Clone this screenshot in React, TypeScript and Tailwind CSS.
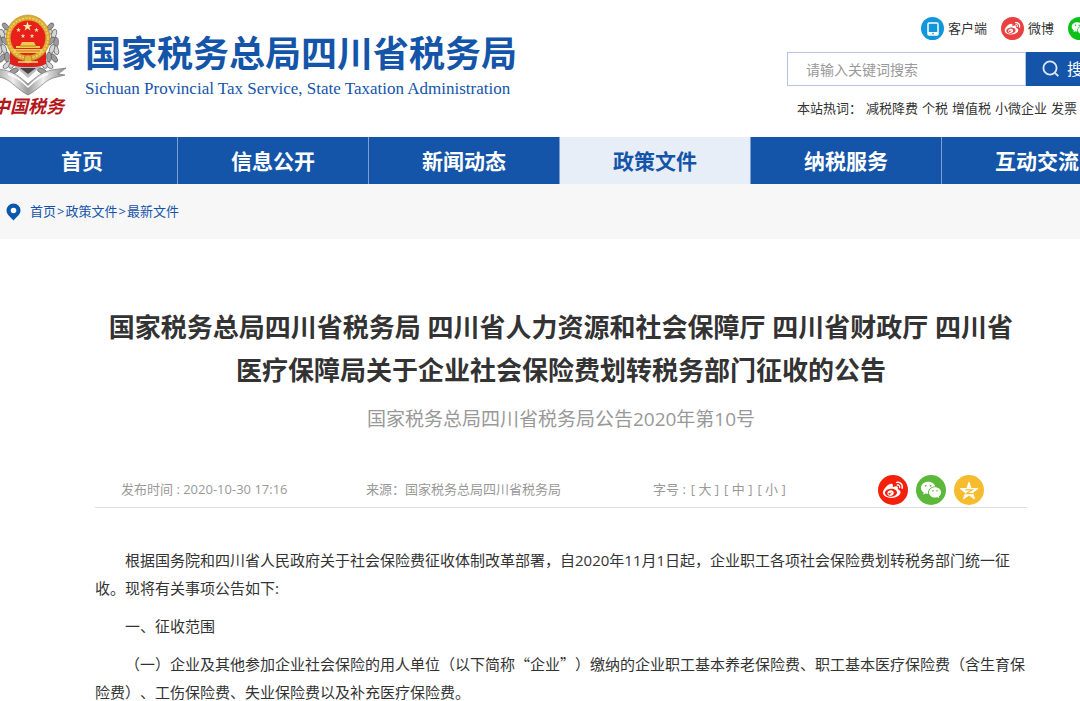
import { RiWechatFill, RiWeiboFill } from 'react-icons/ri';

const navItems = ['首页', '信息公开', '新闻动态', '政策文件', '纳税服务', '互动交流'];
const hotWords = ['减税降费', '个税', '增值税', '小微企业', '发票'];
const crumbs = ['首页', '政策文件', '最新文件'];
const fontSizes = ['大', '中', '小'];

// leaves of the right half of the wreath, mirrored for the left half
const leaves = [
  [50, 27, 40],
  [54, 34, 15],
  [56, 42, 0],
  [56, 50, -15],
  [54, 58, -35],
  [49, 65, -50],
  [42, 71, -65],
  [48, 33, 60],
  [51, 41, 40],
  [52, 49, 20],
  [49, 57, 0],
  [44, 64, -25],
];

const star = 'M0-1 .23-.31.95-.31.37.12.59.81 0 .38-.59.81-.37.12-.95-.31-.23-.31Z';

function Leaves() {
  return (
    <g stroke="#5d5d5d" strokeWidth=".7">
      {leaves.map(([x, y, angle], i) => (
        <ellipse
          key={i}
          cx={x}
          cy={y}
          rx="2.4"
          ry="4.8"
          fill={i % 2 ? '#d6d6d6' : '#9b9b9b'}
          transform={`rotate(${angle} ${x} ${y})`}
        />
      ))}
    </g>
  );
}

function Emblem() {
  return (
    <svg viewBox="-11 13 78 84" className="h-[84px] w-[78px]" aria-hidden="true">
      <defs>
        <linearGradient id="silver" x1="0" x2="1">
          <stop offset="0" stopColor="#8c8c8c" />
          <stop offset=".3" stopColor="#eeeeee" />
          <stop offset=".5" stopColor="#9a9a9a" />
          <stop offset=".7" stopColor="#f1f1f1" />
          <stop offset="1" stopColor="#8a8a8a" />
        </linearGradient>
      </defs>
      <Leaves />
      <g transform="translate(56 0) scale(-1 1)">
        <Leaves />
      </g>
      <path d="M8 60 28 78 48 60Z" fill="#bdbdbd" />
      <path d="M20 68h16l-8 6Z" fill="#444" />
      <path
        d="M-10 68 4 70C14 72 20 77 28 84c8-7 14-12 24-14l14-2-8 6 7 1-12 3C44 81 37 91 28 95 19 91 12 81 3 78l-12-3 7-1Z"
        fill="url(#silver)"
        stroke="#777"
        strokeWidth=".7"
      />
      <path d="M8 74c8 2 14 7 20 13 6-6 12-11 20-13" fill="none" stroke="#fff" strokeWidth="1.4" />
      {/* red drape under the gold ring */}
      <path d="M10 50h36v14c-6 3-12 3-18 3s-12 0-18-3Z" fill="#df1f1b" />
      <ellipse cx="28" cy="38" rx="22" ry="23" fill="#dcab32" stroke="#b98a1d" strokeWidth=".6" />
      <circle cx="28" cy="38" r="20" fill="none" stroke="#f0d272" strokeWidth="1.5" strokeDasharray="2 1.5" />
      <circle cx="28" cy="38" r="17.5" fill="#e8201c" />
      <g fill="#fbe9a0">
        <path d={star} transform="translate(27.5 26.5) scale(5)" />
        <path d={star} transform="translate(18.5 30) scale(2.6)" />
        <path d={star} transform="translate(36.5 30) scale(2.6)" />
        <path d={star} transform="translate(23 36) scale(2.4)" />
        <path d={star} transform="translate(32 36) scale(2.4)" />
      </g>
      <path d="M20 46l2-4h12l2 4h4v2H16v-2ZM13 49h30l-1 4H14Z" fill="#f3c94f" />
      <path d="M16 51h24M20 46h16" stroke="#a86f10" strokeWidth=".8" />
      <circle cx="28" cy="59" r="4" fill="#e3b13a" stroke="#b98a1d" />
      <path d="M18 62h20" stroke="#f6dc82" strokeWidth="1.5" />
    </svg>
  );
}

function QzoneIcon() {
  return (
    <svg viewBox="-1.1 -1.1 2.2 2" className="h-[19px] w-[20px]" aria-hidden="true">
      <path d={star} fill="#fff" stroke="#fff" strokeWidth=".12" strokeLinejoin="round" />
      <path d="M-.4-.18H.34L-.28.24H.42" fill="none" stroke="#f7bc2d" strokeWidth=".14" />
    </svg>
  );
}

function Header() {
  return (
    <header className="flex h-[137px] justify-between overflow-hidden">
      <a href="#" className="flex shrink-0 text-[#1455a9]">
        <div className="-ml-[11px] flex w-[78px] shrink-0 flex-col items-center pt-[13px]">
          <Emblem />
          <span className="text-[18px] leading-[18px] font-bold whitespace-nowrap text-[#b3161b] italic">中国税务</span>
        </div>
        <div className="pt-[31px] pl-[18px] whitespace-nowrap">
          <div className="text-[36px] leading-[46px] font-bold">国家税务总局四川省税务局</div>
          <div className="font-['Liberation_Serif',serif] text-[17px] leading-[24px]">
            Sichuan Provincial Tax Service, State Taxation Administration
          </div>
        </div>
      </a>
      <div className="w-[293px] shrink-0 overflow-hidden pt-[17px] whitespace-nowrap text-[#333]">
        <div className="flex gap-[14px] pl-[134px] text-[13px] leading-[23px]">
          <a href="#" className="flex shrink-0 items-center gap-1">
            <span className="flex size-[23px] items-center justify-center rounded-full bg-[#1296db]">
              <svg viewBox="0 0 12 14" className="h-[14px] w-[12px]" aria-hidden="true">
                <rect x="1" y="1" width="10" height="12" rx="1" fill="none" stroke="#fff" strokeWidth="1.5" />
                <path d="M1 11.3h10" stroke="#fff" strokeWidth="2.6" />
                <circle cx="6" cy="11.6" r=".8" fill="#1296db" />
              </svg>
            </span>
            客户端
          </a>
          <a href="#" className="flex shrink-0 items-center gap-1">
            <span className="flex size-[23px] items-center justify-center rounded-full bg-[#e94041]">
              <RiWeiboFill className="size-[17px] text-white" />
            </span>
            微博
          </a>
          <a href="#" aria-label="微信" className="flex shrink-0 items-center">
            <span className="flex size-[23px] items-center justify-center rounded-full bg-[#0cc11a]">
              <RiWechatFill className="size-[17px] text-white" />
            </span>
          </a>
        </div>
        <form className="mt-[12px] flex h-[34px]">
          <input
            type="text"
            aria-label="搜索"
            placeholder="请输入关键词搜索"
            className="w-[239px] shrink-0 border border-[#b3c8e0] pl-[18px] text-[14px] text-[#333] placeholder:text-[#999]"
          />
          <button type="button" className="flex shrink-0 items-center gap-[7px] bg-[#1455a9] px-4 text-[16px] text-white">
            <svg viewBox="0 0 18 18" className="size-[18px]" fill="none" stroke="#dfe9f5" strokeWidth="1.8" aria-hidden="true">
              <circle cx="8" cy="8" r="6.6" />
              <path d="m12.8 12.8 3.6 3.4" />
            </svg>
            搜索
          </button>
        </form>
        <div className="mt-[12px] flex gap-1 pl-[10px] text-[13px] leading-[20px]">
          <span>本站热词：</span>
          {hotWords.map((word) => (
            <a key={word} href="#">{word}</a>
          ))}
        </div>
      </div>
    </header>
  );
}

export default function App() {
  return (
    <div className="min-h-screen overflow-hidden bg-white font-['Open_Sans','Noto_Sans_CJK_SC',sans-serif] text-[#333]">
      <Header />

      {/* Main navigation */}
      <nav className="overflow-hidden bg-[#1455a9]">
        <ul className="-ml-[13px] flex">
          {navItems.map((item) => (
            <li key={item} className="w-[191px] shrink-0 border-r border-[#7c9fce]">
              <a
                href="#"
                className={`block pt-[2px] text-center text-[21px] leading-[45px] font-bold ${
                  item === '政策文件' ? 'bg-[#e8eef7] text-[#1455a9]' : 'text-white'
                }`}
              >
                {item}
              </a>
            </li>
          ))}
        </ul>
      </nav>

      {/* Breadcrumb */}
      <div className="flex h-[55px] items-center gap-2 bg-[#f7f7f7] pl-[6px] text-[13px] text-[#1455a9]">
        <svg viewBox="0 0 16 18" className="h-[18px] w-[16px]" aria-hidden="true">
          <path d="M7.5.5a7 7 0 0 1 7 7c0 4-4 6.5-7 10-3-3.5-7-6-7-10a7 7 0 0 1 7-7Z" fill="#0a58ae" />
          <circle cx="7.5" cy="7.5" r="2.8" fill="#fff" />
        </svg>
        <div className="flex">
          {crumbs.map((crumb, i) => (
            <div key={crumb} className="flex">
              {i > 0 && <span className="px-px">&gt;</span>}
              <a href="#">{crumb}</a>
            </div>
          ))}
        </div>
      </div>

      {/* Article */}
      <article className="pt-[67px] pr-[53px] pl-[95px]">
        <h1 className="text-center text-[26px] leading-[43px] font-bold">
          国家税务总局四川省税务局 四川省人力资源和社会保障厅 四川省财政厅 四川省
          <br />
          医疗保障局关于企业社会保险费划转税务部门征收的公告
        </h1>
        <p className="mt-[12px] text-center text-[19px] leading-[30px] text-[#999]">国家税务总局四川省税务局公告2020年第10号</p>

        <div className="mt-[39px] flex h-[35px] items-center border-b border-[#dedede] pl-[26px] text-[13px] text-[#999]">
          <span className="w-[245px] shrink-0">发布时间 : 2020-10-30 17:16</span>
          <span className="w-[287px] shrink-0">来源：国家税务总局四川省税务局</span>
          <div className="flex gap-[5px]">
            字号 :
            {fontSizes.map((size) => (
              <button key={size} type="button">[ {size} ]</button>
            ))}
          </div>
          <div className="mr-[43px] ml-auto flex gap-2">
            <button type="button" aria-label="微博" className="flex size-[30px] items-center justify-center rounded-full bg-[#f5200b]">
              <RiWeiboFill className="size-[22px] text-white" />
            </button>
            <button type="button" aria-label="微信" className="flex size-[30px] items-center justify-center rounded-full bg-[#5cb83a]">
              <RiWechatFill className="size-[22px] text-white" />
            </button>
            <button type="button" aria-label="QQ空间" className="flex size-[30px] items-center justify-center rounded-full bg-[#f7bc2d]">
              <QzoneIcon />
            </button>
          </div>
        </div>

        <div className="mt-[38px] flex flex-col gap-[10px] text-[15px] leading-[28px] [text-spacing-trim:space-all]">
          <p className="indent-[30px]">
            根据国务院和四川省人民政府关于社会保险费征收体制改革部署，自2020年11月1日起，企业职工各项社会保险费划转税务部门统一征收。现将有关事项公告如下:
          </p>
          <p className="indent-[30px]">一、征收范围</p>
          <p className="indent-[30px] font-['Noto_Sans_CJK_SC',sans-serif]">
            （一）企业及其他参加企业社会保险的用人单位（以下简称“企业”）缴纳的企业职工基本养老保险费、职工基本医疗保险费（含生育保险费）、工伤保险费、失业保险费以及补充医疗保险费。
          </p>
        </div>
      </article>
    </div>
  );
}
